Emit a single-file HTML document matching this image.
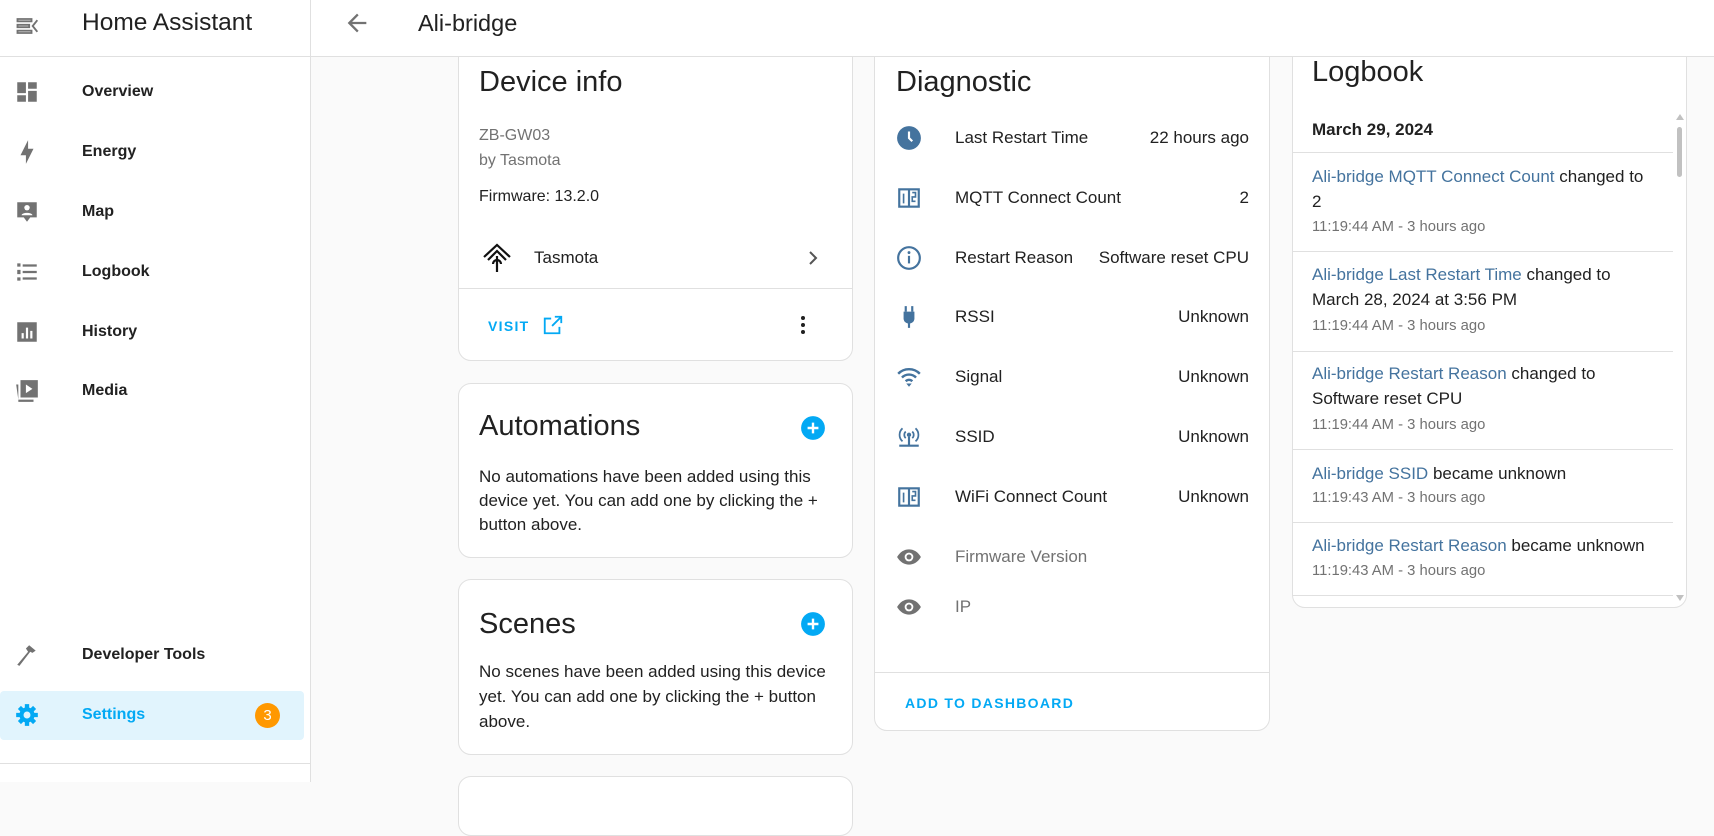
<!DOCTYPE html>
<html><head><meta charset="utf-8"><style>
*{box-sizing:border-box;margin:0;padding:0}
body{width:1714px;height:782px;overflow:hidden;background:#fafafa;font-family:"Liberation Sans",Arial,sans-serif;color:#212121;position:relative}
.a{position:absolute;white-space:nowrap;z-index:3}
.side{position:absolute;left:0;top:0;width:311px;height:782px;background:#fff;border-right:1px solid #e0e0e0;z-index:2}
.hdr{position:absolute;left:311px;top:0;width:1403px;height:57px;background:#fff;border-bottom:1px solid #e0e0e0;z-index:2}
.sline{position:absolute;left:0;top:56px;width:311px;height:1px;background:#e0e0e0;z-index:3}
.nav{position:absolute;left:82px;font-size:16px;font-weight:bold;line-height:20px;color:#212121;z-index:3}
.ic{position:absolute;left:14px;width:26px;height:26px;z-index:3}
.card{position:absolute;background:#fff;border:1px solid #e0e0e0;border-radius:13px;z-index:1}
.t{font-size:17px;line-height:20px}
.h{font-size:29px;line-height:32px;color:#212121}
.lnk{color:#44739e}
.sm{font-size:14.8px;color:#727272;line-height:18px}
</style></head><body>
<div class="side"></div>
<div class="sline"></div>
<div class="hdr"></div>
<svg class="a" style="left:14px;top:12px" width="28" height="28" viewBox="0 0 24 24"><path d="M3 6h12v2H3zM3 11h10v2H3zM3 16h12v2H3zM20 7l-4 5 4 5" fill="none" stroke="#727272" stroke-width="1.6"/></svg>
<div class="a" style="left:82px;top:8px;font-size:24.5px;line-height:30px">Home Assistant</div>
<svg class="a" style="left:343px;top:9px" width="28" height="28" viewBox="0 0 24 24"><path d="M20 11H7.8l5.6-5.6L12 4l-8 8 8 8 1.4-1.4L7.8 13H20z" fill="#727272"/></svg>
<div class="a" style="left:418px;top:8px;font-size:23.5px;line-height:30px">Ali-bridge</div>

<svg class="ic" style="top:79px" viewBox="0 0 24 24"><path d="M3 3h8v10H3zM13 3h8v6h-8zM13 11h8v10h-8zM3 15h8v6H3z" fill="#727272"/></svg>
<svg class="ic" style="top:139px" viewBox="0 0 24 24"><path d="M11 15H6l7-14v8h5l-7 14z" fill="#727272"/></svg>
<svg class="ic" style="top:199px" viewBox="0 0 24 24"><path d="M3 3h18v14h-6l-3 4-3-4H3z" fill="#727272"/><circle cx="12" cy="8" r="2.5" fill="#fff"/><path d="M7 15c0-3 10-3 10 0z" fill="#fff"/></svg>
<svg class="ic" style="top:259px" viewBox="0 0 24 24"><path d="M8 5h13v2H8zM8 11h13v2H8zM8 17h13v2H8zM3 4h3v3H3zM3 10h3v4H3zM3 17h3v3H3z" fill="#727272"/></svg>
<svg class="ic" style="top:319px" viewBox="0 0 24 24"><path d="M3 3h18v18H3z" fill="#727272"/><path d="M7 13h2v5H7zM11 8h2v10h-2zM15 11h2v7h-2z" fill="#fff"/></svg>
<svg class="ic" style="top:378px" viewBox="0 0 24 24"><path d="M2 6h2v16h14v-2H4zM6 2h16v16H6z" fill="#727272"/><path d="M11 6l6 4-6 4z" fill="#fff"/></svg>
<div class="nav" style="top:82px">Overview</div>
<div class="nav" style="top:142px">Energy</div>
<div class="nav" style="top:202px">Map</div>
<div class="nav" style="top:262px">Logbook</div>
<div class="nav" style="top:322px">History</div>
<div class="nav" style="top:381px">Media</div>
<svg class="ic" style="top:642px" viewBox="0 0 24 24"><path d="M3 21L13 9l-2-3 3-3 6 5-3 2-2-1L5 22z" fill="#727272"/></svg>
<div class="nav" style="top:645px">Developer Tools</div>
<div class="a" style="left:0;top:691px;width:304px;height:49px;background:#e1f4fd;border-radius:4px;z-index:2"></div>
<svg class="ic" style="top:702px" viewBox="0 0 24 24"><circle cx="12" cy="12" r="7" fill="#03a9f4"/><path d="M12 2v20M2 12h20M5 5l14 14M19 5L5 19" stroke="#03a9f4" stroke-width="4"/><circle cx="12" cy="12" r="3.2" fill="#e1f4fd"/></svg>
<div class="nav" style="top:705px;color:#03a9f4">Settings</div>
<div class="a" style="left:255px;top:703px;width:25px;height:25px;border-radius:50%;background:#ff9800;color:#fff;font-size:15px;line-height:25px;text-align:center">3</div>
<div class="a" style="left:0;top:763px;width:311px;height:1px;background:#e0e0e0"></div>

<!-- Device info card -->
<div class="card" style="left:458px;top:30px;width:395px;height:331px"></div>
<div class="a h" style="left:479px;top:66px">Device info</div>
<div class="a t" style="left:479px;top:126px;color:#727272;font-size:16px">ZB-GW03</div>
<div class="a t" style="left:479px;top:151px;color:#727272;font-size:16px">by Tasmota</div>
<div class="a t" style="left:479px;top:187px;font-size:16px">Firmware: 13.2.0</div>
<svg class="a" style="left:481px;top:242px" width="32" height="32" viewBox="0 0 32 32"><path d="M3 15L16 3l13 12M7 18l9-9 9 9M12 22a4 4 0 0 1 8 0M16 14v16" fill="none" stroke="#111" stroke-width="2.2"/></svg>
<div class="a t" style="left:534px;top:248px">Tasmota</div>
<svg class="a" style="left:801px;top:246px" width="24" height="24" viewBox="0 0 24 24"><path d="M9 6l6 6-6 6" fill="none" stroke="#555" stroke-width="2"/></svg>
<div class="a" style="left:458px;top:288px;width:395px;height:1px;background:#e0e0e0"></div>
<div class="a" style="left:488px;top:317px;font-size:14px;font-weight:bold;letter-spacing:1.3px;color:#03a9f4;line-height:18px">VISIT</div>
<svg class="a" style="left:542px;top:314px" width="22" height="22" viewBox="0 0 24 24"><path d="M14 3h7v7M21 3l-10 10M19 14v7H3V5h7" fill="none" stroke="#03a9f4" stroke-width="2"/></svg>
<svg class="a" style="left:791px;top:313px" width="24" height="24" viewBox="0 0 24 24"><circle cx="12" cy="5" r="2" fill="#212121"/><circle cx="12" cy="12" r="2" fill="#212121"/><circle cx="12" cy="19" r="2" fill="#212121"/></svg>

<!-- Automations -->
<div class="card" style="left:458px;top:383px;width:395px;height:175px"></div>
<div class="a h" style="left:479px;top:410px">Automations</div>
<svg class="a" style="left:800px;top:415px" width="26" height="26" viewBox="0 0 24 24"><circle cx="12" cy="12" r="11" fill="#03a9f4"/><path d="M12 7v10M7 12h10" stroke="#fff" stroke-width="2.2"/></svg>
<div class="a" style="left:479px;top:465px;font-size:17px;line-height:24px">No automations have been added using this<br>device yet. You can add one by clicking the +<br>button above.</div>

<!-- Scenes -->
<div class="card" style="left:458px;top:579px;width:395px;height:176px"></div>
<div class="a h" style="left:479px;top:608px">Scenes</div>
<svg class="a" style="left:800px;top:611px" width="26" height="26" viewBox="0 0 24 24"><circle cx="12" cy="12" r="11" fill="#03a9f4"/><path d="M12 7v10M7 12h10" stroke="#fff" stroke-width="2.2"/></svg>
<div class="a" style="left:479px;top:659px;font-size:17px;line-height:25px">No scenes have been added using this device<br>yet. You can add one by clicking the + button<br>above.</div>
<div class="card" style="left:458px;top:776px;width:395px;height:60px"></div>

<!-- Diagnostic -->
<div class="card" style="left:874px;top:30px;width:396px;height:701px"></div>
<div class="a h" style="left:896px;top:66px">Diagnostic</div>
<svg class="a" style="left:896px;top:125px" width="26" height="26" viewBox="0 0 24 24"><circle cx="12" cy="12" r="11" fill="#44739e"/><path d="M12 6v6l3 3" stroke="#fff" stroke-width="2" fill="none"/></svg>
<svg class="a" style="left:896px;top:185px" width="26" height="26" viewBox="0 0 24 24"><rect x="2" y="3" width="20" height="18" fill="#44739e"/><rect x="4" y="5" width="7" height="14" fill="#fff"/><rect x="13" y="5" width="7" height="14" fill="#fff"/><path d="M7 8v9M15 7h3v4h-3v4h3" stroke="#44739e" stroke-width="1.5" fill="none"/></svg>
<svg class="a" style="left:896px;top:245px" width="26" height="26" viewBox="0 0 24 24"><circle cx="12" cy="12" r="10" fill="none" stroke="#44739e" stroke-width="2"/><path d="M12 10v7" stroke="#44739e" stroke-width="2"/><circle cx="12" cy="7" r="1.3" fill="#44739e"/></svg>
<svg class="a" style="left:896px;top:304px" width="26" height="26" viewBox="0 0 24 24"><path d="M9 2v5M15 2v5" stroke="#44739e" stroke-width="2"/><path d="M7 7h10v7a5 5 0 0 1-4 4v4h-2v-4a5 5 0 0 1-4-4z" fill="#44739e"/></svg>
<svg class="a" style="left:896px;top:364px" width="26" height="26" viewBox="0 0 24 24"><path d="M2 9a14 14 0 0 1 20 0M5.5 12.5a9 9 0 0 1 13 0M9 16a4 4 0 0 1 6 0" fill="none" stroke="#44739e" stroke-width="2.2"/><path d="M12 21l-2.5-3h5z" fill="#44739e"/></svg>
<svg class="a" style="left:896px;top:424px" width="26" height="26" viewBox="0 0 24 24"><path d="M6 4a8 8 0 0 0 0 12M18 4a8 8 0 0 1 0 12M9 7a4 4 0 0 0 0 6M15 7a4 4 0 0 1 0 6" fill="none" stroke="#44739e" stroke-width="1.6"/><circle cx="12" cy="10" r="2" fill="#44739e"/><path d="M12 12v8M3 20h18" stroke="#44739e" stroke-width="2"/></svg>
<svg class="a" style="left:896px;top:484px" width="26" height="26" viewBox="0 0 24 24"><rect x="2" y="3" width="20" height="18" fill="#44739e"/><rect x="4" y="5" width="7" height="14" fill="#fff"/><rect x="13" y="5" width="7" height="14" fill="#fff"/><path d="M7 8v9M15 7h3v4h-3v4h3" stroke="#44739e" stroke-width="1.5" fill="none"/></svg>
<svg class="a" style="left:896px;top:544px" width="26" height="26" viewBox="0 0 24 24"><path d="M1 12c3-5 7-7 11-7s8 2 11 7c-3 5-7 7-11 7s-8-2-11-7z" fill="#727272"/><circle cx="12" cy="12" r="4" fill="#fff"/><circle cx="12" cy="12" r="2.3" fill="#727272"/></svg>
<svg class="a" style="left:896px;top:594px" width="26" height="26" viewBox="0 0 24 24"><path d="M1 12c3-5 7-7 11-7s8 2 11 7c-3 5-7 7-11 7s-8-2-11-7z" fill="#727272"/><circle cx="12" cy="12" r="4" fill="#fff"/><circle cx="12" cy="12" r="2.3" fill="#727272"/></svg>
<div class="a t" style="left:955px;top:128px">Last Restart Time</div>
<div class="a t" style="left:955px;top:188px">MQTT Connect Count</div>
<div class="a t" style="left:955px;top:248px">Restart Reason</div>
<div class="a t" style="left:955px;top:307px">RSSI</div>
<div class="a t" style="left:955px;top:367px">Signal</div>
<div class="a t" style="left:955px;top:427px">SSID</div>
<div class="a t" style="left:955px;top:487px">WiFi Connect Count</div>
<div class="a t" style="left:955px;top:547px;color:#727272">Firmware Version</div>
<div class="a t" style="left:955px;top:597px;color:#727272">IP</div>
<div class="a t" style="right:465px;top:128px">22 hours ago</div>
<div class="a t" style="right:465px;top:188px">2</div>
<div class="a t" style="right:465px;top:248px">Software reset CPU</div>
<div class="a t" style="right:465px;top:307px">Unknown</div>
<div class="a t" style="right:465px;top:367px">Unknown</div>
<div class="a t" style="right:465px;top:427px">Unknown</div>
<div class="a t" style="right:465px;top:487px">Unknown</div>
<div class="a" style="left:874px;top:672px;width:396px;height:1px;background:#e0e0e0"></div>
<div class="a" style="left:905px;top:694px;font-size:14px;font-weight:bold;letter-spacing:1.3px;color:#03a9f4;line-height:18px">ADD TO DASHBOARD</div>

<!-- Logbook -->
<div class="card" style="left:1292px;top:30px;width:395px;height:578px"></div>
<div class="a h" style="left:1312px;top:56px">Logbook</div>
<div class="a" style="left:1312px;top:120px;font-size:17px;font-weight:bold;line-height:20px">March 29, 2024</div>
<div class="a" style="left:1292px;top:152px;width:381px;height:1px;background:#e0e0e0"></div>
<div class="a t" style="left:1312px;top:164px;line-height:25px"><span class="lnk">Ali-bridge MQTT Connect Count</span> changed to<br>2</div>
<div class="a sm" style="left:1312px;top:218px">11:19:44 AM - 3 hours ago</div>
<div class="a" style="left:1292px;top:251px;width:381px;height:1px;background:#e0e0e0"></div>
<div class="a t" style="left:1312px;top:262px;line-height:25px"><span class="lnk">Ali-bridge Last Restart Time</span> changed to<br>March 28, 2024 at 3:56 PM</div>
<div class="a sm" style="left:1312px;top:317px">11:19:44 AM - 3 hours ago</div>
<div class="a" style="left:1292px;top:351px;width:381px;height:1px;background:#e0e0e0"></div>
<div class="a t" style="left:1312px;top:361px;line-height:25px"><span class="lnk">Ali-bridge Restart Reason</span> changed to<br>Software reset CPU</div>
<div class="a sm" style="left:1312px;top:416px">11:19:44 AM - 3 hours ago</div>
<div class="a" style="left:1292px;top:449px;width:381px;height:1px;background:#e0e0e0"></div>
<div class="a t" style="left:1312px;top:464px"><span class="lnk">Ali-bridge SSID</span> became unknown</div>
<div class="a sm" style="left:1312px;top:489px">11:19:43 AM - 3 hours ago</div>
<div class="a" style="left:1292px;top:522px;width:381px;height:1px;background:#e0e0e0"></div>
<div class="a t" style="left:1312px;top:536px"><span class="lnk">Ali-bridge Restart Reason</span> became unknown</div>
<div class="a sm" style="left:1312px;top:562px">11:19:43 AM - 3 hours ago</div>
<div class="a" style="left:1292px;top:595px;width:381px;height:1px;background:#e0e0e0"></div>
<div class="a" style="left:1677px;top:127px;width:5px;height:50px;border-radius:3px;background:#c1c1c1"></div>
<div class="a" style="left:1676px;top:114px;width:0;height:0;border-left:4px solid transparent;border-right:4px solid transparent;border-bottom:6px solid #c1c1c1"></div>
<div class="a" style="left:1676px;top:595px;width:0;height:0;border-left:4px solid transparent;border-right:4px solid transparent;border-top:6px solid #c1c1c1"></div>
</body></html>
